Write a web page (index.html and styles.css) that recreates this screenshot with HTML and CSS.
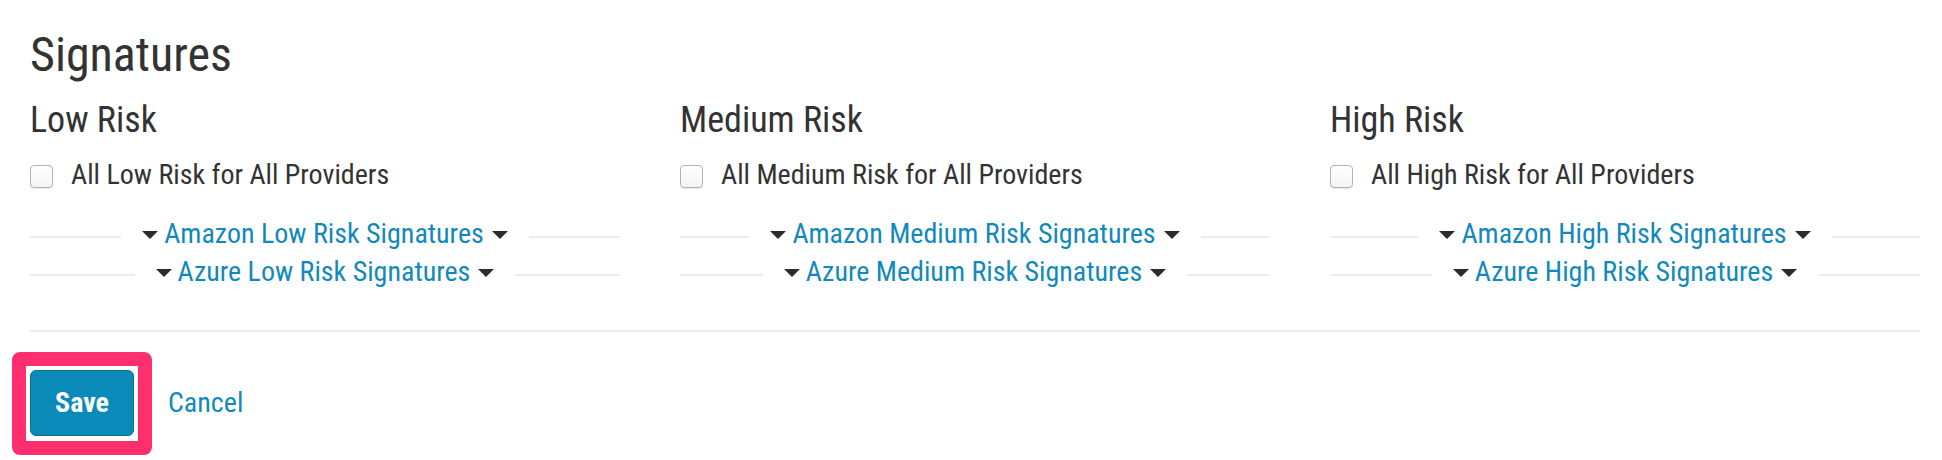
FILE: index.html
```html
<!DOCTYPE html>
<html lang="en">
<head>
<meta charset="utf-8">
<title>Signatures</title>
<link rel="stylesheet" href="styles.css">
</head>
<body>
<div class="page">
  <h2 class="title">Signatures</h2>
  <div class="columns">
    <section class="col">
      <h3 class="risk">Low Risk</h3>
      <label class="check"><input type="checkbox" class="box"><span>All Low Risk for All Providers</span></label>
      <div class="divider"><span class="line"></span><a class="toggle" href="#"><span class="caret"></span><span class="txt">Amazon Low Risk Signatures</span><span class="caret r"></span></a><span class="line"></span></div>
      <div class="divider"><span class="line"></span><a class="toggle" href="#"><span class="caret"></span><span class="txt">Azure Low Risk Signatures</span><span class="caret r"></span></a><span class="line"></span></div>
    </section>
    <section class="col">
      <h3 class="risk">Medium Risk</h3>
      <label class="check"><input type="checkbox" class="box"><span>All Medium Risk for All Providers</span></label>
      <div class="divider"><span class="line"></span><a class="toggle" href="#"><span class="caret"></span><span class="txt">Amazon Medium Risk Signatures</span><span class="caret r"></span></a><span class="line"></span></div>
      <div class="divider"><span class="line"></span><a class="toggle" href="#"><span class="caret"></span><span class="txt">Azure Medium Risk Signatures</span><span class="caret r"></span></a><span class="line"></span></div>
    </section>
    <section class="col">
      <h3 class="risk">High Risk</h3>
      <label class="check"><input type="checkbox" class="box"><span>All High Risk for All Providers</span></label>
      <div class="divider"><span class="line"></span><a class="toggle" href="#"><span class="caret"></span><span class="txt">Amazon High Risk Signatures</span><span class="caret r"></span></a><span class="line"></span></div>
      <div class="divider"><span class="line"></span><a class="toggle" href="#"><span class="caret"></span><span class="txt">Azure High Risk Signatures</span><span class="caret r"></span></a><span class="line"></span></div>
    </section>
  </div>
  <hr class="rule">
  <div class="actions">
    <span class="highlight"><button class="save" type="button">Save</button></span>
    <a class="cancel" href="#">Cancel</a>
  </div>
</div>
</body>
</html>
```

FILE: styles.css
```css
html, body {
  margin: 0;
  padding: 0;
  background: #fff;
}

body {
  font-family: "Roboto Condensed", "Liberation Sans Narrow", Roboto, sans-serif;
  color: #333;
}

.page {
  box-sizing: border-box;
  min-height: 460px;
  padding: 27px 22px 0 30px;
}

.title {
  margin: 0;
  font-size: 48px;
  line-height: 56px;
  font-weight: 400;
  color: #333;
}

.columns {
  display: grid;
  grid-template-columns: repeat(3, 590px);
  column-gap: 60px;
  margin-top: 15px;
}

.col {
  display: flex;
  flex-direction: column;
}

.risk {
  margin: 0;
  font-size: 36px;
  line-height: 44px;
  font-weight: 400;
  color: #333;
}

.check {
  display: flex;
  align-items: center;
  margin-top: 17px;
  height: 32px;
  font-size: 28px;
  line-height: 32px;
  color: #333;
}

.box {
  appearance: none;
  -webkit-appearance: none;
  box-sizing: border-box;
  width: 23px;
  height: 23px;
  margin: 2px 18px 0 0;
  border: 1px solid #b3b3b3;
  border-radius: 4px;
  background: linear-gradient(#fff, #f4f4f4);
  box-shadow: 0 1px 1px rgba(0, 0, 0, 0.1);
  flex: none;
}

.divider {
  display: flex;
  align-items: flex-start;
  height: 38px;
  gap: 21px;
}

.check + .divider {
  margin-top: 24px;
}

.line {
  flex: 1;
  height: 2px;
  margin-top: 21px;
  background: #ececec;
}

.toggle {
  display: flex;
  align-items: center;
  font-size: 28px;
  line-height: 38px;
  color: #1289bc;
  text-decoration: none;
}

.caret {
  width: 0;
  height: 0;
  border-left: 8px solid transparent;
  border-right: 8px solid transparent;
  border-top: 8px solid #2b2b2b;
  margin-right: 6px;
  margin-top: 1px;
}

.caret.r {
  margin-right: 0;
  margin-left: 8px;
}

.rule {
  margin: 39px 0 0 0;
  border: 0;
  height: 2px;
  background: #ececec;
}

.actions {
  display: flex;
  align-items: center;
  margin-top: 38px;
}

.highlight {
  position: relative;
  display: inline-flex;
}

.highlight::before {
  content: "";
  position: absolute;
  left: -18px;
  right: -18px;
  top: -18px;
  bottom: -19px;
  border: 14px solid #ff2e6e;
  border-radius: 8px;
  background: #fff;
  z-index: 0;
}

.save {
  position: relative;
  z-index: 1;
  width: 104px;
  height: 66px;
  padding: 0;
  border: 1px solid #0f6f95;
  border-radius: 6px;
  background: #0a8ab9;
  color: #fff;
  font-family: "Roboto Condensed", "Liberation Sans Narrow", Roboto, sans-serif;
  font-size: 28px;
  font-weight: 700;
  line-height: 64px;
  cursor: pointer;
}

.cancel {
  margin-left: 34px;
  font-size: 28px;
  line-height: 40px;
  color: #1289bc;
  text-decoration: none;
}
```
